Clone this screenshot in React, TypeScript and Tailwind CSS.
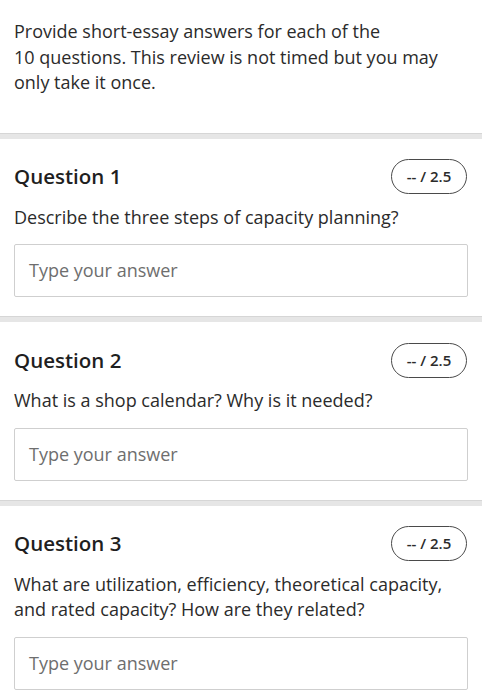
const questions = [
  { n: 1, text: 'Describe the three steps of capacity planning?' },
  { n: 2, text: 'What is a shop calendar? Why is it needed?' },
  { n: 3, text: 'What are utilization, efficiency, theoretical capacity, and rated capacity? How are they related?' },
];

function Separator() {
  return <div className="h-[6px] border-t border-[#d6d6d6] bg-[#e6e6e6]" />;
}

function QuestionBlock({ n, text }: { n: number; text: string }) {
  return (
    <div className="px-[14px] pb-[19px] pt-[20px]">
      <div className="flex h-[36px] items-center justify-between">
        <h2 className="text-[20.5px] font-semibold text-[#1f1f1f]">Question {n}</h2>
        <div className="mr-[1px] flex h-[35px] w-[76px] items-center justify-center rounded-full border border-[#4a4a4a] text-[15px] font-semibold text-[#2b2b2b]">
          -- / 2.5
        </div>
      </div>
      <p className="mt-[10px] text-[18px] leading-[25.5px] text-[#2b2b2b]">{text}</p>
      <div className="mt-[14px] flex h-[53px] items-center rounded-[2px] border border-[#cfcfcf] px-[14px]">
        <span className="text-[18px] text-[#6e6e6e]">Type your answer</span>
      </div>
    </div>
  );
}

export default function App() {
  return (
    <div className="min-h-[700px] bg-white font-['Open_Sans',sans-serif]">
      <div className="px-[14px] pb-[37px] pt-[19px]">
        <p className="text-[18px] leading-[25.5px] text-[#2b2b2b]">
          Provide short-essay answers for each of the
          <br />
          10 questions. This review is not timed but you may only take it once.
        </p>
      </div>
      {questions.map((q) => (
        <div key={q.n}>
          <Separator />
          <QuestionBlock n={q.n} text={q.text} />
        </div>
      ))}
    </div>
  );
}
